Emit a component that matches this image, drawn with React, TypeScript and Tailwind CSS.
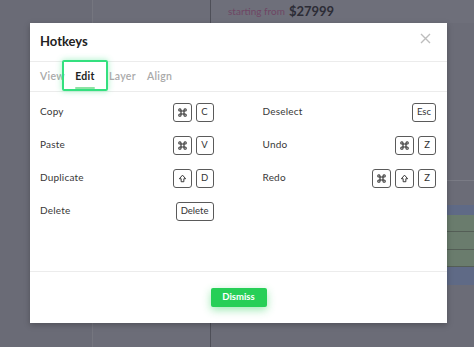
import React from 'react'

type Shortcut = { label: string; keys: string[] }

const left: Shortcut[] = [
  { label: 'Copy', keys: ['cmd', 'C'] },
  { label: 'Paste', keys: ['cmd', 'V'] },
  { label: 'Duplicate', keys: ['shift', 'D'] },
  { label: 'Delete', keys: ['Delete'] },
]

const right: Shortcut[] = [
  { label: 'Deselect', keys: ['Esc'] },
  { label: 'Undo', keys: ['cmd', 'Z'] },
  { label: 'Redo', keys: ['cmd', 'shift', 'Z'] },
]

function CmdIcon() {
  return (
    <svg width="9" height="9" viewBox="0 0 12 12" fill="none" stroke="#333" strokeWidth="1.5">
      <path d="M4 4h4v4H4z M4 4V2.5A1.5 1.5 0 1 0 2.5 4H4 M8 4V2.5A1.5 1.5 0 1 1 9.5 4H8 M4 8v1.5A1.5 1.5 0 1 1 2.5 8H4 M8 8v1.5A1.5 1.5 0 1 0 9.5 8H8" />
    </svg>
  )
}

function ShiftIcon() {
  return (
    <svg width="9" height="9" viewBox="0 0 12 12" fill="none" stroke="#333" strokeWidth="1.3" strokeLinejoin="round">
      <path d="M6 1.5L1.8 6.3h2.4v4h3.6v-4h2.4z" />
    </svg>
  )
}

function Key({ k }: { k: string }) {
  return (
    <span className="h-[19px] min-w-[18px] px-[4px] flex items-center justify-center border border-[#5a5a5a] rounded-[3px] text-[9.5px] text-[#333]">
      {k === 'cmd' ? <CmdIcon /> : k === 'shift' ? <ShiftIcon /> : k}
    </span>
  )
}

function Column({ items }: { items: Shortcut[] }) {
  return (
    <div className="flex flex-col gap-[14px]">
      {items.map((s) => (
        <div key={s.label} className="h-[19px] flex items-center justify-between">
          <span className="text-[10px] text-[#383838] -mt-[2px] tracking-[0.2px]">{s.label}</span>
          <div className="flex gap-[4px]">
            {s.keys.map((k, i) => (
              <Key key={i} k={k} />
            ))}
          </div>
        </div>
      ))}
    </div>
  )
}

export default function App() {
  return (
    <div className="relative w-[474px] h-[347px] overflow-hidden bg-[#6b6c77] font-['Lato',sans-serif]">
      {/* page behind the overlay */}
      <div className="flex h-full">
        <div className="w-[93px] border-r border-[#75767f] bg-[#6a6b76]" />
        <div className="w-[118px] border-r border-[#4e4f58] bg-[#6c6d78]" />
        <div className="flex-1 flex flex-col">
          <div className="h-[23px] flex items-center pl-[17px] gap-[4px] bg-[#6e6f7a]">
            <span className="text-[10px] text-[#6e4664]">starting from</span>
            <span className="text-[13px] font-bold text-[#2c2c36]">$27999</span>
          </div>
          <div className="h-[157px]" />
          <div className="h-[1px] bg-[#7a7b85]" />
          <div className="h-[24px]" />
          <div className="h-[10px] bg-[#5f6a86]" />
          <div className="h-[17px] bg-[#6a7c6d] border-b border-[#545e56]" />
          <div className="h-[18px] bg-[#6a7c6d] border-b border-[#545e56]" />
          <div className="h-[17px] bg-[#6a7c6d] border-b border-[#545e56]" />
          <div className="h-[18px] bg-[#5f6a86]" />
        </div>
      </div>

      {/* modal */}
      <div className="absolute left-[30px] top-[23px] w-[417px] h-[300px] bg-white flex flex-col shadow-[0_2px_6px_rgba(0,0,0,0.25)]">
        <div className="h-[39px] shrink-0 flex items-center justify-between pl-[10px] pr-[11px] border-b border-[#ececec]">
          <span className="text-[13px] font-bold text-[#222]">Hotkeys</span>
          <svg width="11" height="11" viewBox="0 0 11 11" className="-mt-[8px] mr-[5px]">
            <path d="M1 1L10 10M10 1L1 10" stroke="#bdbdbd" strokeWidth="1.4" />
          </svg>
        </div>

        <div className="h-[30px] shrink-0 flex items-stretch pl-[10px] border-b border-[#ececec]">
          <div className="w-[22px] flex items-center">
            <span className="text-[10.5px] font-semibold text-[#a9a9a9] tracking-[0.3px]">View</span>
          </div>
          <div className="-mt-[2px] w-[46px] flex items-center justify-center border-2 border-[#34e07f] rounded-[2px] shadow-[0_0_6px_rgba(52,224,127,0.45)]">
            <span className="relative text-[10.5px] font-bold text-[#222] mt-[2px] tracking-[0.3px]">
              Edit
              <span className="absolute left-0 right-0 -bottom-[5px] h-[2px] bg-[#8ee3a4] rounded" />
            </span>
          </div>
          <div className="w-[39px] pl-[1px] flex items-center">
            <span className="text-[10.5px] font-semibold text-[#a9a9a9] tracking-[0.3px]">Layer</span>
          </div>
          <div className="flex items-center">
            <span className="text-[10.5px] font-semibold text-[#a9a9a9] tracking-[0.3px]">Align</span>
          </div>
        </div>

        <div className="flex-1 grid grid-cols-2 gap-x-[49px] pl-[10px] pr-[11px] pt-[11px]">
          <Column items={left} />
          <Column items={right} />
        </div>

        <div className="h-[52px] shrink-0 flex items-center justify-center border-t border-[#ececec]">
          <button className="w-[56px] h-[19px] rounded-[2px] bg-[#27cf57] text-white text-[9.5px] font-bold shadow-[0_3px_8px_rgba(39,207,87,0.45)]">
            Dismiss
          </button>
        </div>
      </div>
    </div>
  )
}
